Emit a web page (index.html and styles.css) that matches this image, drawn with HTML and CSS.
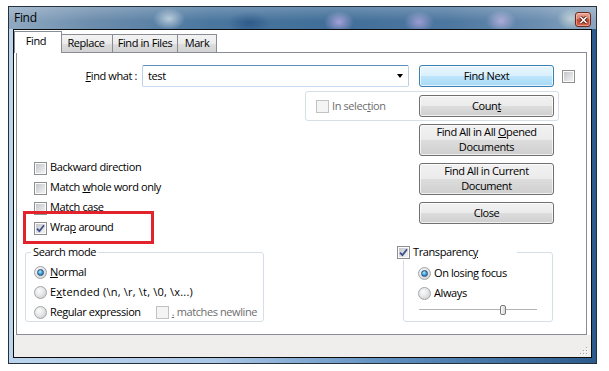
FILE: index.html
```html
<!DOCTYPE html>
<html lang="en">

<head>
  <meta charset="UTF-8" />
  <title>Find</title>
  <link rel="stylesheet" href="styles.css">
</head>

<body>
  <div class="window">
    <div class="titlebar">
      <span class="title">Find</span>
      <span class="close-btn">
        <svg width="9" height="8" viewBox="0 0 9 8">
          <path d="M1.5 1L7.5 7M7.5 1L1.5 7" stroke="#4a1c14" stroke-width="3.2" />
          <path d="M1.5 1L7.5 7M7.5 1L1.5 7" stroke="#ffffff" stroke-width="1.6" />
        </svg>
      </span>
    </div>

    <div class="client">
      <div class="tabs">
        <div class="tab active">Find</div>
        <div class="tab tab-replace">Replace</div>
        <div class="tab tab-files">Find in Files</div>
        <div class="tab tab-mark">Mark</div>
      </div>

      <div class="panel">
        <div class="panel-grid">
          <div class="find-what">
            <span class="txt"><u>F</u>ind what :</span>
            <div class="combo">
              <span class="txt">test</span>
              <span class="combo-arrow"></span>
            </div>
          </div>
          <div class="btn default"><span class="txt">Find Next</span></div>
          <span class="check extra-check"></span>

          <div class="selection-group">
            <span class="check disabled"></span>
            <span class="txt dim">In selec<u>t</u>ion</span>
            <div class="btn count-btn"><span class="txt">Coun<u>t</u></span></div>
          </div>

          <div class="btn tall opened-btn"><span class="txt">Find All in All <u>O</u>pened<br>Documents</span></div>

          <div class="options">
            <div class="opt"><span class="check"></span><span class="txt">Backward direction</span></div>
            <div class="opt"><span class="check"></span><span class="txt">Match <u>w</u>hole word only</span></div>
            <div class="opt"><span class="check"></span><span class="txt">Match case</span></div>
            <div class="opt wrap-opt">
              <span class="check">
                <svg width="9" height="9" viewBox="0 0 9 9">
                  <path d="M1 4.6L3.4 7.2L8 1.2" fill="none" stroke="#3b4f8c" stroke-width="1.8" />
                </svg>
              </span>
              <span class="txt">Wra<u>p</u> around</span>
            </div>
          </div>

          <div class="button-stack">
            <div class="btn tall"><span class="txt">Find All in Current<br>Document</span></div>
            <div class="btn"><span class="txt">Close</span></div>
          </div>
        </div>

        <div class="lower">
          <div class="group search-mode">
            <div class="group-title">Search mode</div>
            <div class="radio-list">
              <div class="opt"><span class="radio on"></span><span class="txt"><u>N</u>ormal</span></div>
              <div class="opt ext"><span class="radio"></span><span class="txt">E<u>x</u>tended (\n, \r, \t, \0, \x...)</span></div>
              <div class="opt">
                <span class="radio"></span>
                <span class="txt">Re<u>g</u>ular expression</span>
                <span class="check disabled newline-check"></span>
                <span class="txt dim"><u>.</u> matches newline</span>
              </div>
            </div>
          </div>

          <div class="group transparency">
            <div class="group-title check-title">
              <span class="check">
                <svg width="9" height="9" viewBox="0 0 9 9">
                  <path d="M1 4.6L3.4 7.2L8 1.2" fill="none" stroke="#3b4f8c" stroke-width="1.8" />
                </svg>
              </span>
              <span class="txt">Transparenc<u>y</u></span>
            </div>
            <div class="radio-list">
              <div class="opt"><span class="radio on"></span><span class="txt">On losing focus</span></div>
              <div class="opt"><span class="radio"></span><span class="txt">Always</span></div>
            </div>
            <div class="slider"><span class="thumb"></span></div>
          </div>
        </div>
      </div>

      <div class="statusbar">
        <svg class="grip" width="8" height="8" viewBox="0 0 8 8">
          <g fill="#ffffff">
            <rect x="7" y="1" width="1" height="1" />
            <rect x="7" y="4" width="1" height="1" />
            <rect x="4" y="4" width="1" height="1" />
            <rect x="7" y="7" width="1" height="1" />
            <rect x="4" y="7" width="1" height="1" />
            <rect x="1" y="7" width="1" height="1" />
          </g>
          <g fill="#a9a6a2">
            <rect x="6" y="0" width="1" height="1" />
            <rect x="6" y="3" width="1" height="1" />
            <rect x="3" y="3" width="1" height="1" />
            <rect x="6" y="6" width="1" height="1" />
            <rect x="3" y="6" width="1" height="1" />
            <rect x="0" y="6" width="1" height="1" />
          </g>
        </svg>
      </div>
    </div>
  </div>
</body>

</html>
```
FILE: styles.css
```css
html,
body {
  margin: 0;
  padding: 0;
  background-color: #ffffff;
}

body {
  font-family: 'Open Sans', sans-serif;
  font-size: 11px;
  letter-spacing: -0.4px;
  color: #000000;
}

u {
  text-decoration: underline;
  text-underline-offset: 1px;
}

/* Open Sans sits a little low next to the controls */
.txt {
  padding-bottom: 2px;
  white-space: nowrap;
}

.window {
  box-sizing: border-box;
  width: 589px;
  height: 358px;
  margin: 6px 0 0 8px;
  border: 1px solid #25313d;
  background: linear-gradient(to right, #bcd5ee 0%, #aac7e6 35%, #5e8ebe 65%, #2b5a8b 100%);
  display: flex;
  flex-direction: column;
}

/* aero title bar */
.titlebar {
  height: 22px;
  flex-shrink: 0;
  display: flex;
  align-items: flex-start;
  justify-content: space-between;
  padding: 0 5px 0 5px;
  background:
    linear-gradient(rgba(255, 255, 255, 0.22), rgba(255, 255, 255, 0) 65%),
    radial-gradient(ellipse 16px 11px at 160px 12px, rgba(215, 228, 236, 0.75), transparent),
    radial-gradient(ellipse 22px 12px at 240px 16px, rgba(28, 70, 122, 0.55), transparent),
    radial-gradient(ellipse 15px 11px at 330px 15px, rgba(190, 172, 232, 0.8), transparent),
    radial-gradient(ellipse 15px 11px at 410px 15px, rgba(190, 172, 232, 0.7), transparent),
    radial-gradient(ellipse 15px 11px at 492px 14px, rgba(205, 188, 235, 0.7), transparent),
    radial-gradient(ellipse 14px 11px at 562px 12px, rgba(212, 228, 222, 0.7), transparent),
    linear-gradient(to right, #8fa9c1 0%, #6d8dad 14%, #4b779f 34%, #406e98 55%, #4d77a0 75%, #6a8db0 90%, #8ba6bf 100%);
}

.title {
  font-size: 12px;
  letter-spacing: -0.3px;
  line-height: 21px;
}

.close-btn {
  margin-top: 5px;
  box-sizing: border-box;
  width: 16px;
  height: 15px;
  border: 1px solid #6a2a1f;
  border-radius: 3px;
  background: linear-gradient(#eaa894 0%, #d9826b 42%, #c5452c 52%, #d4654c 100%);
  box-shadow: inset 0 0 0 1px rgba(255, 220, 210, 0.45);
  display: flex;
  align-items: center;
  justify-content: center;
}

.client {
  flex: 1;
  margin: 0 4px 5px 4px;
  border: 1px solid #0c0c0c;
  background: #ffffff;
  display: flex;
  flex-direction: column;
}

/* tabs */
.tabs {
  height: 22px;
  padding-left: 2px;
  display: flex;
  align-items: flex-end;
}

.tab {
  box-sizing: border-box;
  height: 18px;
  width: 54px;
  margin-right: -1px;
  border: 1px solid #898c95;
  border-bottom: none;
  background: linear-gradient(#f3f3f3 0%, #ebebeb 50%, #dedede 50%, #d2d2d2 100%);
  text-align: center;
  line-height: 16px;
}

.tab.active {
  position: relative;
  z-index: 1;
  height: 22px;
  width: 48px;
  margin: 0 -3px -1px -2px;
  padding-right: 4px;
  background: #ffffff;
  line-height: 17px;
}

.tab-files {
  width: 66px;
}

.tab-mark {
  width: 40px;
}

.panel {
  box-sizing: border-box;
  height: 283px;
  margin: 0 4px 0 2px;
  border: 1px solid #898c95;
  background: #ffffff;
  padding-top: 12px;
}

.panel-grid {
  display: grid;
  grid-template-columns: 402px 135px 32px;
}

.find-what {
  grid-column: 1;
  grid-row: 1;
  display: flex;
  justify-content: flex-end;
  align-items: center;
  gap: 5px;
  padding-right: 10px;
}

.combo {
  box-sizing: border-box;
  width: 267px;
  height: 22px;
  border: 1px solid;
  border-color: #5c8dbb #b8d0e6 #c5daed #b8d0e6;
  border-radius: 2px;
  padding: 0 5px 0 5px;
  display: flex;
  align-items: center;
  justify-content: space-between;
}

.combo-arrow {
  width: 0;
  height: 0;
  border-top: 4px solid #000000;
  border-left: 3.5px solid transparent;
  border-right: 3.5px solid transparent;
}

/* buttons */
.btn {
  box-sizing: border-box;
  height: 22px;
  border: 1px solid #707070;
  border-radius: 3px;
  background: linear-gradient(#f2f2f2 0%, #ebebeb 50%, #dddddd 50%, #cfcfcf 100%);
  box-shadow: inset 0 0 0 1px rgba(255, 255, 255, 0.7);
  display: flex;
  align-items: center;
  justify-content: center;
  text-align: center;
  line-height: 15px;
}

.btn.default {
  border-color: #3c7fb1;
  background: linear-gradient(#eaf6fd 0%, #d9f0fc 50%, #bee6fd 50%, #a7d9f5 100%);
}

.btn.tall {
  height: 32px;
}

.extra-check {
  grid-column: 3;
  grid-row: 1;
  align-self: center;
  margin-left: 8px;
}

.selection-group {
  grid-column: 1 / 4;
  grid-row: 2;
  box-sizing: border-box;
  width: 254px;
  height: 30px;
  margin: 4px 0 0 288px;
  border: 1px solid #d5dfe5;
  border-radius: 3px;
  padding: 0 4px 0 10px;
  display: flex;
  align-items: center;
}

.count-btn {
  width: 135px;
  margin-left: auto;
}

.opened-btn {
  grid-column: 2;
  grid-row: 3;
  margin-top: 3px;
}

.options {
  grid-column: 1;
  grid-row: 4;
  margin-top: 2px;
  padding-left: 17px;
}

.options .txt {
  padding-bottom: 4px;
}

.button-stack {
  grid-column: 2;
  grid-row: 4;
  margin-top: 7px;
  display: flex;
  flex-direction: column;
  gap: 7px;
  align-self: start;
}

.opt {
  height: 20px;
  display: flex;
  align-items: center;
  white-space: nowrap;
}

.opt.ext {
  letter-spacing: 0.2px;
}

/* annotation box round "Wrap around" */
.wrap-opt {
  position: relative;
}

.wrap-opt::after {
  content: "";
  position: absolute;
  left: -11px;
  top: -7px;
  width: 131px;
  height: 33px;
  box-sizing: border-box;
  border: 3px solid #e3232b;
}

/* checkboxes and radios */
.check {
  box-sizing: border-box;
  flex-shrink: 0;
  width: 13px;
  height: 13px;
  margin-right: 3px;
  border: 1px solid #8e8f8f;
  padding: 1px;
  background: linear-gradient(135deg, #c3c6cb, #f3f3f3) content-box, #fbfbfb;
  display: inline-flex;
  align-items: center;
  justify-content: center;
}

.check.disabled {
  border-color: #c2c2c2;
  background: #f4f4f4;
}

.dim {
  color: #6d6d6d;
}

.radio {
  box-sizing: border-box;
  flex-shrink: 0;
  width: 13px;
  height: 13px;
  margin-right: 3px;
  border: 1px solid #a2a4a6;
  border-radius: 50%;
  background: radial-gradient(circle at 38% 35%, #fbfbfb 0%, #e6e7e8 45%, #c4c6c9 100%);
  display: inline-flex;
  align-items: center;
  justify-content: center;
}

.radio.on::after {
  content: "";
  width: 7px;
  height: 7px;
  box-sizing: border-box;
  border-radius: 50%;
  border: 1px solid #25507c;
  background: radial-gradient(circle at 40% 35%, #b9ecff 0%, #48a6dc 45%, #1d5a8f 100%);
}

/* lower group boxes */
.lower {
  margin-top: 14px;
  display: flex;
}

.group {
  box-sizing: border-box;
  height: 70px;
  border: 1px solid #d5dfe5;
  border-radius: 3px;
}

.group-title {
  width: fit-content;
  margin: -8px 0 0 5px;
  padding: 0 2px;
  line-height: 14px;
  background: #ffffff;
}

.search-mode {
  width: 239px;
  margin-left: 8px;
}

.search-mode .radio-list {
  margin-top: 3px;
  padding-left: 8px;
}

.newline-check {
  margin-left: 15px;
}

.transparency {
  width: 150px;
  margin-left: 139px;
}

.check-title {
  box-sizing: border-box;
  width: 120px;
  margin-left: -7px;
  padding: 0;
  display: flex;
  align-items: center;
}

.check-title .txt {
  padding-bottom: 1px;
}

.transparency .radio-list {
  margin-top: 3px;
  padding-left: 14px;
}

.slider {
  width: 118px;
  height: 10px;
  margin: 2px 0 0 15px;
  display: flex;
  align-items: center;
  background: linear-gradient(#b3b3b3, #b3b3b3) 0 4px / 100% 1px no-repeat,
    linear-gradient(#ffffff, #ffffff) 0 5px / 100% 1px no-repeat;
}

.thumb {
  box-sizing: border-box;
  width: 6px;
  height: 10px;
  margin-left: 81px;
  border: 1px solid #7c7c7c;
  border-radius: 2px;
  background: linear-gradient(to right, #fbfbfb, #d6d6d6);
}

.statusbar {
  flex: 1;
  background: #f0eeec;
  display: flex;
  justify-content: flex-end;
  align-items: flex-end;
  padding: 0 3px 2px 0;
}
```
